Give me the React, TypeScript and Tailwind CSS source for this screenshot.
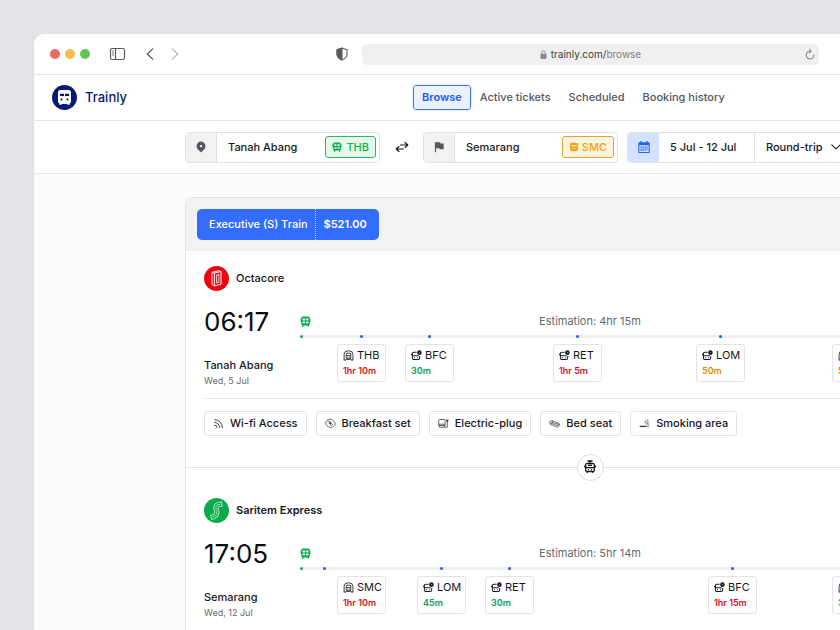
import type { ReactNode } from "react";
import { clsx } from "clsx";
import { MdFlag } from "react-icons/md";

type Tone = "red" | "green" | "amber";

interface Stop {
    code: string;
    wait: string;
    tone: Tone;
    at: number;
    station?: boolean;
}

interface Leg {
    operator: string;
    logo: ReactNode;
    bold?: boolean;
    time: string;
    city: string;
    date: string;
    estimation: string;
    dots: number[];
    stops: Stop[];
}

const STOP_WIDTH = 49;

const TONES: Record<Tone, string> = {
    red: "text-[#d4111b]",
    green: "text-[#0b9e58]",
    amber: "text-[#e08a0b]",
};

/* Icons */

const TrainLogo = () => (
    <svg viewBox="0 0 25 25" className="size-[25px]" aria-hidden="true">
        <circle cx="12.5" cy="12.5" r="12.5" fill="#081a78" />
        <path
            fill="#fff"
            fillRule="evenodd"
            d="M8.600 5h7.800a2.600 2.600 0 0 1 2.600 2.600v8.900a2.300 2.300 0 0 1-1.300 2v1.300h-2.400v-.9H9.700v.9H7.300v-1.300A2.300 2.300 0 0 1 6 16.500V7.600A2.600 2.600 0 0 1 8.600 5ZM8 8.800v2.200h4V8.800Zm5 0v2.200h4V8.800Z"
        />
        <circle cx="9.500" cy="14.500" r="1.100" fill="#081a78" />
        <circle cx="15.500" cy="14.500" r="1.100" fill="#081a78" />
    </svg>
);

const OctacoreLogo = () => (
    <svg viewBox="0 0 25 25" className="size-[25px]" fill="none" aria-hidden="true">
        <circle cx="12.5" cy="12.5" r="12.5" fill="#ec0612" />
        <g stroke="#fff" strokeLinejoin="round">
            <path d="m10.400 7 6.600-1.500v12.700l-6.600 1.700z" strokeWidth="1" />
            <path d="m12.600 9 2.300-.6v7.900l-2.300.6z" strokeWidth=".8" />
            <path d="M10.400 7 8 6.300v12l2.400 1.600M8 6.300l6.500-1.500 2.500.7" strokeWidth=".9" />
        </g>
    </svg>
);

const RIBBON = "M15.800 6.300c-3 .3-4.300 1.600-3.800 4 .4 1.600 1.200 2.600.8 4.700-.3 1.800-1.700 3.200-3.600 3.800";

const SaritemLogo = () => (
    <svg viewBox="0 0 25 25" className="size-[25px]" fill="none" aria-hidden="true">
        <circle cx="12.5" cy="12.5" r="12.5" fill="#0aab48" />
        <path d={RIBBON} stroke="#c9f5d8" strokeWidth="5" strokeLinecap="square" />
        <path d={RIBBON} stroke="#0aab48" strokeWidth="3.400" strokeLinecap="square" />
        <path d={RIBBON} stroke="#c9f5d8" strokeWidth=".8" strokeLinecap="square" />
    </svg>
);

const TrainIcon = ({ className }: { className?: string }) => (
    <svg viewBox="0 0 12 12" className={className} fill="currentColor" aria-hidden="true">
        <path
            fillRule="evenodd"
            d="M3.200.500h5.600a2 2 0 0 1 1.900 1.800v.7h.7v3.200h-.7v2.300a1.600 1.600 0 0 1-.9 1.500v1.700H8.200v-1.400H3.800v1.400H2.200V10a1.600 1.600 0 0 1-.9-1.500V6.200H.6V3h.7v-.7A2 2 0 0 1 3.200.500ZM2.800 2.700v2.200h2.600V2.700Zm3.800 0v2.200h2.600V2.700ZM2.800 6.200V8h2.600V6.200Zm3.800 0V8h2.600V6.200Z"
        />
    </svg>
);

const MetroIcon = ({ className }: { className?: string }) => (
    <svg viewBox="0 0 12 12" className={className} fill="currentColor" aria-hidden="true">
        <path
            fillRule="evenodd"
            d="M3.500.800h5A2.700 2.700 0 0 1 11.200 3.500l-.6 5A2.500 2.500 0 0 1 8.100 11H3.900a2.500 2.500 0 0 1-2.500-2.500l-.6-5A2.700 2.700 0 0 1 3.500.800ZM2.600 3.600l.2 1.500h6.400l.2-1.500ZM4 7.400v1.100h4V7.400Z"
        />
    </svg>
);

const TramIcon = () => (
    <svg viewBox="0 0 14 14" className="size-3.5" fill="none" stroke="currentColor" strokeWidth="1.300" aria-hidden="true">
        <path d="M4.500 1h5M7 1v2.200M4 3.500h6a1.300 1.300 0 0 1 1.300 1.300v5.400A1.300 1.300 0 0 1 10 11.500H4a1.300 1.300 0 0 1-1.300-1.300V4.800A1.300 1.300 0 0 1 4 3.500ZM2.700 7.700h8.600M1.800 5.500v2M12.200 5.500v2M4.200 11.500V13M9.800 11.500V13M5 9.600h1M8 9.600h1M5 5.300h4" />
    </svg>
);

const StationIcon = () => (
    <svg viewBox="0 0 12 12" className="size-[11px]" fill="none" stroke="currentColor" strokeWidth=".9" aria-hidden="true">
        <path d="M1.200 11V4.800A3.800 3.800 0 0 1 5 1h2a3.800 3.800 0 0 1 3.800 3.800V11M.7 11h2.600M8.700 11h2.600" />
        <path d="M4.300 3.500h3.400a.8.8 0 0 1 .8.8v3.900a.8.8 0 0 1-.8.800H4.300a.8.8 0 0 1-.8-.8V4.300a.8.8 0 0 1 .8-.8ZM3.500 6.200h5M4.200 9l-1.200 2M7.800 9 9 11M4 10.300h4" />
        <path d="M4.600 7.600h.7M6.700 7.600h.7" />
    </svg>
);

const TransitIcon = () => (
    <svg viewBox="0 0 12 12" className="size-[11px]" fill="none" stroke="currentColor" strokeWidth="1.100" aria-hidden="true">
        <path d="M6.200 2.500H3A1.500 1.500 0 0 0 1.500 4v4.700a1.700 1.700 0 0 0 1.700 1.700h4.600a1.700 1.700 0 0 0 1.700-1.700V6.500M1.500 6.200h7M.6 4.200v1.600M3.300 8.400h1M6.700 8.400h1" />
        <circle cx="9.200" cy="2.900" r="2.500" fill="currentColor" stroke="none" />
        <path d="M9.200 1.900v1.200h.8" stroke="#fff" strokeWidth=".5" />
    </svg>
);

const PinIcon = () => (
    <svg viewBox="0 0 12 12" className="size-3" fill="currentColor" aria-hidden="true">
        <path fillRule="evenodd" d="M6 .600a4.500 4.500 0 0 1 4.500 4.500c0 2.500-2 4.100-3.500 5.300L6 11.500l-1-1.100C3.500 9.200 1.500 7.600 1.500 5.100A4.500 4.500 0 0 1 6 .600Zm0 3.300a1.200 1.200 0 1 0 0 2.400 1.200 1.200 0 0 0 0-2.400Z" />
    </svg>
);

const CalendarIcon = () => (
    <svg viewBox="0 0 12 12" className="size-3" fill="currentColor" aria-hidden="true">
        <path
            fillRule="evenodd"
            d="M2.200 0h1.300v1.200h5V0h1.300v1.200H11a.7.7 0 0 1 .7.7v9.400a.7.7 0 0 1-.7.700H1a.7.7 0 0 1-.7-.7V1.900a.7.7 0 0 1 .7-.7h1.200ZM1.400 4.200v6.700h9.200V4.200Z"
        />
        <path d="M2.500 5.500h1.300v1.200H2.500zM4.500 5.500h1.300v1.200H4.500zM6.500 5.500h1.300v1.200H6.500zM8.400 5.500h1.200v1.200H8.400zM2.500 7.500h1.300v1.200H2.500zM4.500 7.500h1.300v1.200H4.500zM6.500 7.500h1.300v1.200H6.500zM8.400 7.500h1.200v1.200H8.400zM2.500 9.300h1.300v.8H2.500zM4.500 9.300h1.300v.8H4.500zM6.500 9.300h1.300v.8H6.500z" />
    </svg>
);

const SwapIcon = () => (
    <svg viewBox="0 0 14 12" className="h-3 w-3.5" fill="none" stroke="currentColor" strokeWidth="1.100" strokeLinecap="round" strokeLinejoin="round" aria-hidden="true">
        <path d="M5.500 4h7.200M10 1.500 12.800 4 10 6.500M8.500 8h-7.200M4 5.500 1.200 8 4 10.500" />
    </svg>
);

const amenityIcon = "size-[11px] text-[#3f4148]";

const AMENITIES = [
    {
        label: "Wi-fi Access",
        icon: (
            <svg viewBox="0 0 11 11" className={amenityIcon} fill="none" stroke="currentColor" strokeLinecap="round" aria-hidden="true">
                <path d="M1.700 1.700a7.800 7.800 0 0 1 7.800 7.800M1.700 4.400a5.100 5.100 0 0 1 5.100 5.100M1.700 7.100a2.400 2.400 0 0 1 2.400 2.400" />
            </svg>
        ),
    },
    {
        label: "Breakfast set",
        icon: (
            <svg viewBox="0 0 11 11" className={amenityIcon} fill="none" stroke="currentColor" strokeWidth=".8" aria-hidden="true">
                <path d="M4.500 1.200c1.700-.5 2.900.2 3.700 1.400.8 1.100 2.100 1.700 2 3.400-.1 1.400-1.200 1.600-2 2.500-.9 1-2.200 1.600-3.700.8C2.700 8.300.8 7.500.8 4.900c0-2 1.700-3.200 3.700-3.700Z" />
                <path d="M3 4.400c.2-1 1-1.500 2-1.500M7.700 6c-.3 1-1.100 1.500-2.100 1.500" />
                <circle cx="5.300" cy="5.200" r="1" fill="currentColor" />
            </svg>
        ),
    },
    {
        label: "Electric-plug",
        icon: (
            <svg viewBox="0 0 11 11" className={amenityIcon} fill="none" stroke="currentColor" strokeWidth=".8" aria-hidden="true">
                <path d="M1.500 1.500h4.800a.8.8 0 0 1 .8.8v5.200H.7V2.300a.8.8 0 0 1 .8-.8ZM.7 6.200h6.400M1.500 7.500v1.700h5V7.500M6.500 9.200h2.800V4" />
                <path d="M8.400 2h1.900v2H8.400z" fill="currentColor" stroke="none" />
                <path d="M8.700 1v1M10 1v1" strokeWidth=".6" />
            </svg>
        ),
    },
    {
        label: "Bed seat",
        icon: (
            <svg viewBox="0 0 11 11" className={amenityIcon} fill="none" stroke="currentColor" strokeWidth=".7" strokeLinejoin="round" aria-hidden="true">
                <path d="M.8 3.500 3.200 2.700l6.300 2.400.8 1.300-.6 2.300-2 .3L1.200 6.300ZM3.200 2.700l.4 2 6.700 1.700M1.200 4.900l6.800 2.600 2.300-1.100M3.600 4.700 2.300 5.300" />
            </svg>
        ),
    },
    {
        label: "Smoking area",
        icon: (
            <svg viewBox="0 0 11 11" className={amenityIcon} fill="none" stroke="currentColor" strokeWidth=".7" aria-hidden="true">
                <path d="M.7 7.700h6.600v1.400H.7z" fill="currentColor" stroke="none" />
                <path d="M8.300 7.600v1.500M9.800 7.600v1.500M9.800 6.800c0-1.300-.7-1.700-2-1.700-1.500 0-2-.5-2-1.300s.7-1.200 1.400-1.200M8.300 5c1-.5.9-1.600.3-2.200M8.300 6.800c0-.5-.3-.7-1-.7M8.600 2.800c-.2-.5-.1-1 .3-1.400" />
            </svg>
        ),
    },
];

const LEGS: Leg[] = [
    {
        operator: "Octacore",
        logo: <OctacoreLogo />,
        time: "06:17",
        city: "Tanah Abang",
        date: "Wed, 5 Jul",
        estimation: "4hr 15m",
        dots: [60, 128, 276, 419],
        stops: [
            { code: "THB", wait: "1hr 10m", tone: "red", at: 37, station: true },
            { code: "BFC", wait: "30m", tone: "green", at: 105 },
            { code: "RET", wait: "1hr 5m", tone: "red", at: 253 },
            { code: "LOM", wait: "50m", tone: "amber", at: 396 },
            { code: "SMC", wait: "50m", tone: "amber", at: 532, station: true },
        ],
    },
    {
        operator: "Saritem Express",
        logo: <SaritemLogo />,
        bold: true,
        time: "17:05",
        city: "Semarang",
        date: "Wed, 12 Jul",
        estimation: "5hr 14m",
        dots: [23, 140, 208, 431],
        stops: [
            { code: "SMC", wait: "1hr 10m", tone: "red", at: 37, station: true },
            { code: "LOM", wait: "45m", tone: "green", at: 117 },
            { code: "RET", wait: "30m", tone: "green", at: 185 },
            { code: "BFC", wait: "1hr 15m", tone: "red", at: 408 },
            { code: "THB", wait: "30m", tone: "green", at: 532, station: true },
        ],
    },
];

/* Browser chrome */

const BrowserBar = () => (
    <div className="flex h-10 items-center">
        <div className="flex w-[328px] shrink-0 items-center pl-4">
            <div className="flex gap-[5px]">
                <span className="size-2.5 rounded-full bg-[#ec6a5e]" />
                <span className="size-2.5 rounded-full bg-[#f4be4f]" />
                <span className="size-2.5 rounded-full bg-[#61c554]" />
            </div>
            <button type="button" aria-label="Toggle sidebar" className="ml-[19px] text-[#5c5c5c]">
                <svg viewBox="0 0 17 14" className="h-3.5 w-[17px]" fill="none" stroke="currentColor">
                    <rect x="1.500" y="1.500" width="14" height="11" rx="1.500" strokeWidth="1.200" />
                    <path d="M6.500 1.500v11" strokeWidth="1.200" />
                    <path d="M3 4h2M3 6h2M3 8h2" strokeWidth=".8" />
                </svg>
            </button>
            <button type="button" aria-label="Back" className="ml-5 text-[#4a4a4a]">
                <svg viewBox="0 0 8 12" className="h-3 w-2" fill="none" stroke="currentColor" strokeWidth="1.200" strokeLinecap="round">
                    <path d="M6.700.900 1.300 6l5.400 5.100" />
                </svg>
            </button>
            <button type="button" aria-label="Forward" className="ml-[17px] text-[#b4b4b4]">
                <svg viewBox="0 0 8 12" className="h-3 w-2" fill="none" stroke="currentColor" strokeWidth="1.200" strokeLinecap="round">
                    <path d="M1.300.900 6.700 6l-5.400 5.100" />
                </svg>
            </button>
            <button type="button" aria-label="Privacy report" className="mr-3.5 ml-auto text-[#5c5c5c]">
                <svg viewBox="0 0 12 14" className="h-3.5 w-3" fill="none" stroke="currentColor">
                    <path d="M6 1 1 2.700V7c0 3 2.200 4.900 5 6 2.800-1.100 5-3 5-6V2.700Z" strokeWidth="1.100" strokeLinejoin="round" />
                    <path d="M6 1 1 2.700V7c0 3 2.200 4.900 5 6Z" fill="currentColor" />
                </svg>
            </button>
        </div>
        <div className="flex h-[21px] flex-1 items-center rounded-[5px] bg-[#f0f0f0] px-1">
            <div className="flex flex-1 items-center justify-center gap-1 pl-2.5 text-[10px] leading-4">
                <svg viewBox="0 0 8 10" className="h-[9px] w-[7px] text-[#8a8a8a]" aria-hidden="true">
                    <rect x=".5" y="4" width="7" height="6" rx="1" fill="currentColor" />
                    <path d="M2 4.500V3a2 2 0 0 1 4 0v1.500" fill="none" stroke="currentColor" strokeWidth="1.100" />
                </svg>
                <p className="text-[#3d3d3d]">
                    trainly.com/<span className="text-[#808080]">browse</span>
                </p>
            </div>
            <button type="button" aria-label="Reload" className="text-[#6e6e6e]">
                <svg viewBox="0 0 10 12" className="h-3 w-2.5" fill="none" stroke="currentColor" strokeWidth=".9" strokeLinecap="round">
                    <path d="M5.500 3.200H5a3.900 3.900 0 1 0 3.900 3.900M4.300 1.200l2 2-2 1.900" />
                </svg>
            </button>
        </div>
        <div className="w-[327px] shrink-0" />
    </div>
);

const Header = () => (
    <header className="flex h-[46px] items-center border-t border-[#e6e6e8] pl-[18px]">
        <a href="#" className="flex w-[361px] items-center gap-2 text-[13px] font-medium text-[#081a78]">
            <TrainLogo />
            Trainly
        </a>
        <nav className="flex items-center text-[11px] font-medium text-[#55575d]">
            <a href="#browse" className="rounded-[3px] border border-[#3f76ff] bg-[#ebf1ff] px-2 py-[3px] leading-[17px] font-semibold text-[#1a5cff] outline-1 outline-[#e3ebff]">
                Browse
            </a>
            <a href="#active" className="ml-[9px]">Active tickets</a>
            <a href="#scheduled" className="ml-[18px]">Scheduled</a>
            <a href="#history" className="ml-[18px]">Booking history</a>
        </nav>
    </header>
);

/* Search row */

interface PlaceFieldProps {
    id: string;
    label: string;
    value: string;
    icon: ReactNode;
    badge: ReactNode;
}

const PlaceField = ({ id, label, value, icon, badge }: PlaceFieldProps) => (
    <div className="flex h-[31px] w-[195px] items-stretch overflow-hidden rounded border border-[#e2e2e5] bg-white">
        <label htmlFor={id} aria-label={label} className="flex w-[31px] shrink-0 items-center justify-center border-r border-[#e2e2e5] bg-[#f2f2f2] text-[#55575d]">
            {icon}
        </label>
        <input id={id} defaultValue={value} className="w-0 min-w-0 flex-1 pl-[11px] text-[11px] font-medium text-[#16181d] outline-none" />
        <div className="flex items-center pr-[3px]">{badge}</div>
    </div>
);

const SearchBar = () => (
    <form className="flex h-[53px] items-center border-t border-[#e6e6e8] px-[151px] text-[11px] font-medium text-[#16181d]">
        <PlaceField
            id="from"
            label="Departure"
            value="Tanah Abang"
            icon={<PinIcon />}
            badge={
                <span className="flex items-center gap-1 rounded-[3px] border border-[#2fb36b] bg-[#e3fbe9] px-1.5 py-0.5 leading-4 text-[#0fae50]">
                    <TrainIcon className="size-[10px]" />
                    THB
                </span>
            }
        />
        <button type="button" aria-label="Swap stations" className="mr-3.5 ml-[15px]">
            <SwapIcon />
        </button>
        <PlaceField
            id="to"
            label="Destination"
            value="Semarang"
            icon={<MdFlag className="size-3.5" />}
            badge={
                <span className="flex items-center gap-[3px] rounded-[3px] border border-[#e8a03c] bg-[#fff6e0] px-1.5 py-0.5 leading-4 text-[#ff9d0a]">
                    <MetroIcon className="size-[10px]" />
                    SMC
                </span>
            }
        />
        <div className="ml-[9px] flex h-[31px] flex-1 items-stretch overflow-hidden rounded border border-[#e2e2e5] bg-white">
            <label htmlFor="dates" aria-label="Travel dates" className="flex w-[31px] shrink-0 items-center justify-center bg-[#d3e3ff] text-[#2463f5]">
                <CalendarIcon />
            </label>
            <input id="dates" defaultValue="5 Jul - 12 Jul" className="w-24 border-r border-[#e2e2e5] pl-[11px] outline-none" />
            <div className="relative flex items-center">
                <select aria-label="Trip type" className="w-[90px] appearance-none bg-transparent pl-[11px] outline-none">
                    <option>Round-trip</option>
                    <option>One-way</option>
                </select>
                <svg viewBox="0 0 10 6" className="pointer-events-none absolute right-1 h-1.5 w-2.5" fill="none" stroke="currentColor" strokeWidth="1.100" strokeLinecap="round" aria-hidden="true">
                    <path d="m.8.800 4.200 4L9.200.800" />
                </svg>
            </div>
        </div>
    </form>
);

/* Ticket */

const StopCard = ({ stop, gap }: { stop: Stop; gap: number }) => (
    <li
        style={{ marginLeft: gap }}
        className="w-[49px] shrink-0 rounded-[3px] border border-[#e4e4e7] py-[3px] pl-[5px] leading-[15px]"
    >
        <div className="flex items-center gap-[3px] text-[11px] text-[#16181d]">
            {stop.station ? <StationIcon /> : <TransitIcon />}
            {stop.code}
        </div>
        <div className={clsx("text-[9px] font-semibold whitespace-nowrap", TONES[stop.tone])}>{stop.wait}</div>
    </li>
);

const Timeline = ({ leg }: { leg: Leg }) => (
    <div className="min-w-0 flex-1 pt-[7px]">
        <div className="grid grid-cols-[1fr_auto_1fr] items-center">
            <TrainIcon className="size-[11px] text-[#0fae50]" />
            <p className="text-[11px] leading-4 text-[#66686e]">Estimation: {leg.estimation}</p>
        </div>
        <div className="relative mt-1.5 h-[3px] rounded-full bg-[#f0f0f1]">
            <span className="absolute left-0 size-[3px] rounded-full bg-[#0fae50]" />
            {leg.dots.map((dot) => (
                <span key={dot} style={{ left: dot }} className="absolute size-[3px] rounded-full bg-[#1a5cff]" />
            ))}
        </div>
        <ol className="mt-1.5 flex">
            {leg.stops.map((stop, i) => (
                <StopCard
                    key={stop.code}
                    stop={stop}
                    gap={i === 0 ? stop.at : stop.at - leg.stops[i - 1].at - STOP_WIDTH}
                />
            ))}
        </ol>
    </div>
);

const LegSection = ({ leg }: { leg: Leg }) => (
    <section className="px-[18px]">
        <div className="flex items-center gap-[7px]">
            {leg.logo}
            <h2 className={clsx("text-[11px] text-[#16181d]", leg.bold ? "font-semibold" : "font-medium")}>{leg.operator}</h2>
        </div>
        <div className="mt-[15px] flex border-b border-[#e6e6e8] pr-24 pb-[9px]">
            <div className="w-24 shrink-0">
                <p className="text-[26px] leading-8 text-[#0c0d10]">{leg.time}</p>
                <p className="mt-[19px] text-[11px] leading-4 font-medium text-[#16181d]">{leg.city}</p>
                <p className="text-[9px] leading-4 text-[#66686e]">{leg.date}</p>
            </div>
            <Timeline leg={leg} />
        </div>
        <ul className="mt-3 flex gap-[9px]">
            {AMENITIES.map(({ label, icon }) => (
                <li key={label} className="flex items-center gap-1.5 rounded-[3px] border border-[#e4e4e7] px-2 py-[3px] text-[11px] leading-[17px] font-medium text-[#16181d]">
                    {icon}
                    {label}
                </li>
            ))}
        </ul>
    </section>
);

const LegDivider = () => (
    <div className="flex h-[62px] items-center">
        <span className="h-px flex-1 bg-[#e4e4e7]" />
        <span className="flex size-[27px] items-center justify-center rounded-full border border-[#dcdce0] text-[#16181d]">
            <TramIcon />
        </span>
        <span className="h-px flex-1 bg-[#e4e4e7]" />
    </div>
);

const TicketCard = () => (
    <article className="overflow-hidden rounded-lg border border-[#e2e2e5] bg-white">
        <div className="bg-[#f2f2f2] px-[11px] py-[11px]">
            <button type="button" className="flex rounded-[5px] bg-[#336dff] text-[11px] leading-[31px] text-white">
                <span className="border-r border-dotted border-white/60 pr-[7px] pl-3 font-medium">Executive (S) Train</span>
                <span className="pr-3 pl-2 font-semibold">$521.00</span>
            </button>
        </div>
        <div className="pt-[15px] pb-8">
            <LegSection leg={LEGS[0]} />
            <LegDivider />
            <LegSection leg={LEGS[1]} />
        </div>
    </article>
);

export default function App() {
    return (
        <div className="h-screen overflow-hidden bg-[#e2e3e9] pt-[34px] pl-[34px] font-['Inter','Liberation_Sans',sans-serif]">
            {/* the browser window runs past the right edge of the page */}
            <div className="-mr-[306px] overflow-hidden rounded-t-[10px] bg-white">
                <BrowserBar />
                <Header />
                <SearchBar />
                <main className="border-t border-[#e6e6e8] bg-[#fcfcfc] px-[151px] pt-[23px] pb-10">
                    <TicketCard />
                </main>
            </div>
        </div>
    );
}
